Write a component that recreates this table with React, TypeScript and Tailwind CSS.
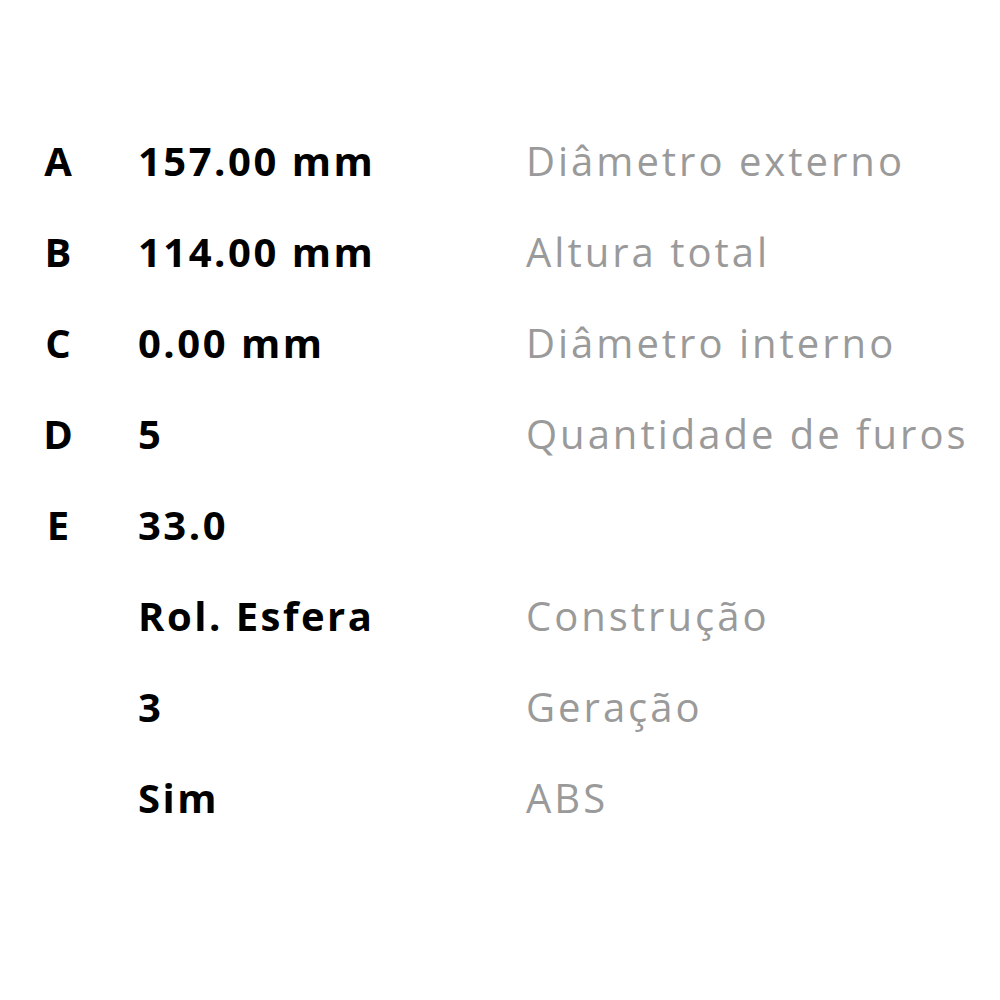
const rows: { key: string; value: string; label: string }[] = [
  { key: "A", value: "157.00 mm", label: "Diâmetro externo" },
  { key: "B", value: "114.00 mm", label: "Altura total" },
  { key: "C", value: "0.00 mm", label: "Diâmetro interno" },
  { key: "D", value: "5", label: "Quantidade de furos" },
  { key: "E", value: "33.0", label: "" },
  { key: "", value: "Rol. Esfera", label: "Construção" },
  { key: "", value: "3", label: "Geração" },
  { key: "", value: "Sim", label: "ABS" },
];

export default function App() {
  return (
    <div
      className="h-[1000px] w-[1000px] bg-white pt-[115px]"
      style={{ fontFamily: '"Open Sans", "Liberation Sans", sans-serif' }}
    >
      {rows.map((r, i) => (
        <div key={i} className="flex h-[91px] items-center text-[40px] leading-none">
          <div className="w-[116px] text-center font-bold text-black">{r.key}</div>
          <div className="ml-[22px] w-[388px] font-bold tracking-[2.5px] text-black">{r.value}</div>
          <div className="tracking-[3px] text-[#9a9a9a]">{r.label}</div>
        </div>
      ))}
    </div>
  );
}
